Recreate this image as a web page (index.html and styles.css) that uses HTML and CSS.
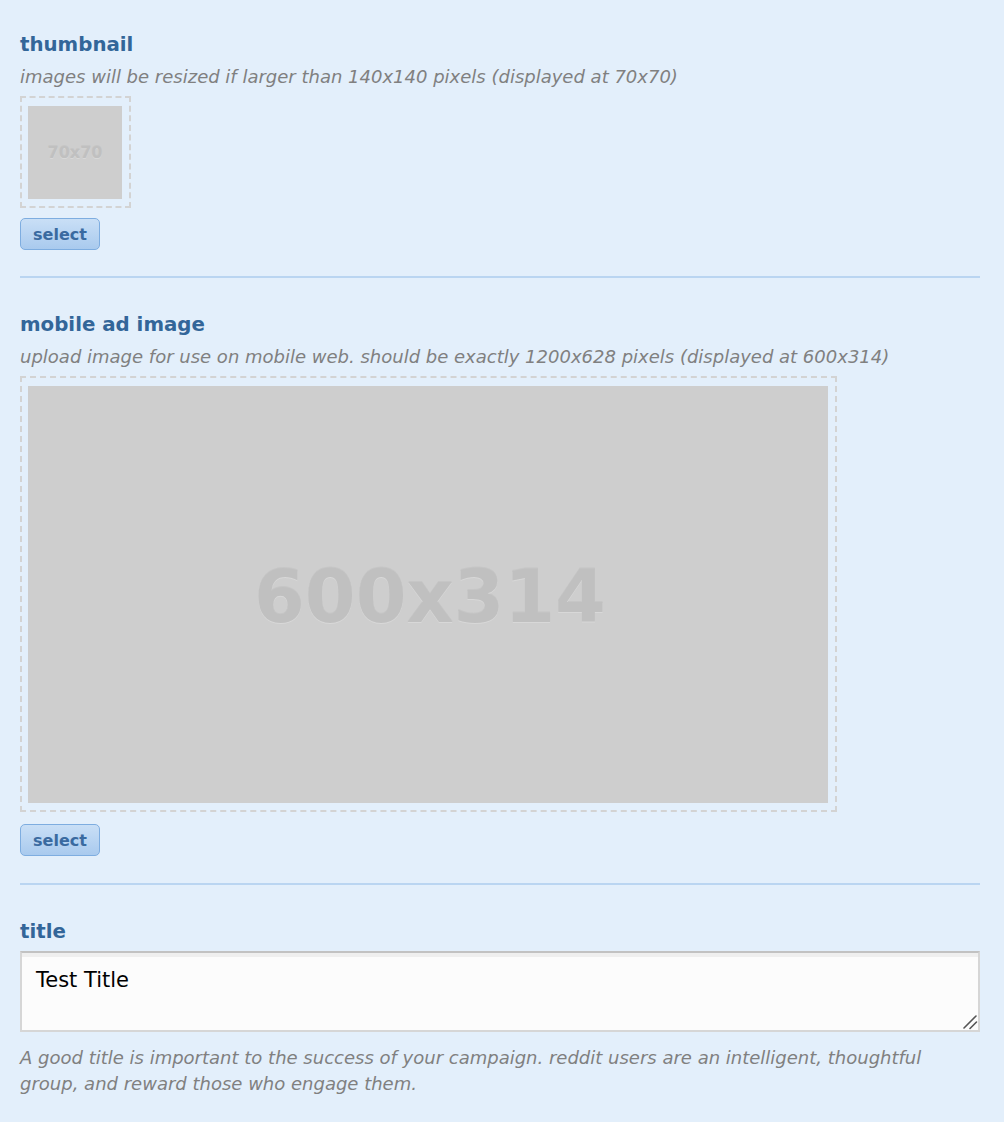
FILE: index.html
```html
<!DOCTYPE html>
<html lang="en">
<head>
<meta charset="utf-8">
<title>Ad form</title>
<link rel="stylesheet" href="styles.css">
</head>
<body>
<main class="form">
  <section class="field">
    <h2 class="label">thumbnail</h2>
    <p class="hint">images will be resized if larger than 140x140 pixels (displayed at 70x70)</p>
    <div class="preview">
      <div class="placeholder placeholder-thumb"><span>70x70</span></div>
    </div>
    <button class="btn" type="button">select</button>
  </section>
  <hr class="divider">
  <section class="field">
    <h2 class="label">mobile ad image</h2>
    <p class="hint">upload image for use on mobile web. should be exactly 1200x628 pixels (displayed at 600x314)</p>
    <div class="preview">
      <div class="placeholder placeholder-mobile"><span>600x314</span></div>
    </div>
    <button class="btn btn-second" type="button">select</button>
  </section>
  <hr class="divider divider-second">
  <section class="field">
    <h2 class="label">title</h2>
    <div class="textarea-wrap">
      <textarea class="title-input">Test Title</textarea>
      <svg class="grip" width="16" height="16" viewBox="0 0 16 16" aria-hidden="true">
        <line x1="14" y1="2" x2="2" y2="14" stroke="#555" stroke-width="1.6" stroke-linecap="round"/>
        <line x1="14.5" y1="8" x2="8" y2="14.5" stroke="#555" stroke-width="1.6" stroke-linecap="round"/>
      </svg>
    </div>
    <p class="hint hint-below">A good title is important to the success of your campaign. reddit users are an intelligent, thoughtful group, and reward those who engage them.</p>
  </section>
</main>
</body>
</html>
```

FILE: styles.css
```css
html, body {
  margin: 0;
  padding: 0;
  background: #e3effb;
}

body {
  font-family: "DejaVu Sans", Verdana, sans-serif;
  color: #222;
}

.form {
  display: flex;
  flex-direction: column;
  padding: 33px 24px 20px 20px;
}

.field {
  display: flex;
  flex-direction: column;
  align-items: flex-start;
}

.label {
  margin: 0;
  font-size: 19.8px;
  line-height: 24px;
  font-weight: bold;
  color: #336699;
}

.hint {
  margin: 7px 0 0;
  font-size: 18px;
  line-height: 26px;
  font-style: italic;
  color: #808080;
}

.preview {
  margin-top: 6px;
  border: 2px dashed #d3d3d3;
  padding: 8px 7px 7px 6px;
  display: flex;
}

.placeholder {
  background: #cecece;
  display: flex;
  align-items: center;
  justify-content: center;
  font-weight: bold;
  color: #c0c0c0;
  text-shadow: 0 1px 0 #d8d8d8, 0 -1px 0 #c6c6c6;
}

.placeholder-thumb {
  width: 94px;
  height: 93px;
  font-size: 16px;
}

.placeholder-mobile {
  width: 800px;
  height: 417px;
  font-size: 73px;
}

.placeholder-mobile span {
  padding: 4px 0 0 4px;
}

.btn {
  margin-top: 10px;
  width: 80px;
  height: 32px;
  padding: 0;
  border: 1.5px solid #7eade0;
  border-radius: 5px;
  background: linear-gradient(#c9dff6, #a9caee);
  font-family: "DejaVu Sans", Verdana, sans-serif;
  font-size: 16px;
  font-weight: bold;
  color: #3a6aa0;
}

.btn-second {
  margin-top: 12px;
}

.divider {
  margin: 26px 0 0;
  border: 0;
  height: 2px;
  background: #bad5f1;
  width: 100%;
}

.divider-second {
  margin-top: 27px;
}

.divider + .field {
  padding-top: 35px;
}

.textarea-wrap {
  position: relative;
  margin-top: 7px;
  width: 100%;
  display: flex;
}

.title-input {
  box-sizing: border-box;
  width: 100%;
  height: 81px;
  margin: 0;
  border: 2px solid #d6d6d6;
  border-top-color: #c2c2c2;
  background: linear-gradient(#efefef 0, #efefef 4px, #fcfcfc 4px);
  padding: 15px 14px 10px;
  font-family: "DejaVu Sans", Verdana, sans-serif;
  font-size: 21px;
  line-height: 24px;
  color: #000;
  resize: none;
  outline: none;
}

.grip {
  position: absolute;
  right: 2px;
  bottom: 2px;
  pointer-events: none;
}

.hint-below {
  margin-top: 13px;
}
```
